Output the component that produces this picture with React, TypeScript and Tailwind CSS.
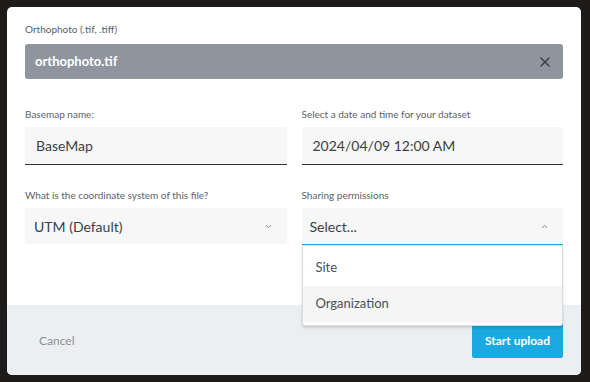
import React from "react";
import { ChevronDown, ChevronUp, X } from "lucide-react";

const font = { fontFamily: "Lato, 'Liberation Sans', sans-serif" };

const Label: React.FC<{ children: React.ReactNode }> = ({ children }) => (
  <div className="text-[10px] leading-[14px] text-[#5b6168] mb-[6px]">{children}</div>
);

export default function App() {
  return (
    <div
      className="w-[590px] h-[382px] bg-[#1d1c1a] p-[7px] pr-[9px] pb-[7px] overflow-hidden"
      style={font}
    >
      <div className="w-[574px] h-[368px] bg-white rounded-[5px] flex flex-col overflow-visible">
        <div className="relative flex-1 px-[18px] pt-[15px]">
          <div className="text-[10px] leading-[14px] text-[#5b6168] mb-[8px]">Orthophoto (.tif, .tiff)</div>
          <div className="h-[35px] bg-[#8e959e] rounded-[3px] flex items-center justify-between pl-[10px] pr-[10px]">
            <span className="text-white text-[13px] font-bold">orthophoto.tif</span>
            <X size={16} strokeWidth={2.2} className="text-[#3a3f45]" />
          </div>

          <div className="grid grid-cols-2 gap-x-[15px] mt-[28px]">
            <div>
              <Label>Basemap name:</Label>
              <div className="h-[38px] bg-[#f7f7f7] border-b border-[#333] flex items-center px-[11px] text-[14px] text-[#3a3f45]">
                BaseMap
              </div>
            </div>
            <div>
              <Label>Select a date and time for your dataset</Label>
              <div className="h-[38px] bg-[#f7f7f7] border-b border-[#333] flex items-center px-[11px] text-[14px] text-[#3a3f45]">
                2024/04/09 12:00 AM
              </div>
            </div>

            <div className="mt-[23px]">
              <Label>What is the coordinate system of this file?</Label>
              <div className="h-[36px] bg-[#f7f7f7] flex items-center justify-between pl-[9px] pr-[14px] text-[14px] text-[#3a3f45]">
                <span>UTM (Default)</span>
                <ChevronDown size={9} strokeWidth={2} className="text-[#666]" />
              </div>
            </div>
            <div className="mt-[23px] relative">
              <Label>Sharing permissions</Label>
              <div className="h-[37px] bg-[#f7f7f7] border-b border-[#1ba9e1] flex items-center justify-between pl-[8px] pr-[14px] text-[14px] text-[#3a3f45]">
                <span>Select...</span>
                <ChevronUp size={9} strokeWidth={2} className="text-[#666]" />
              </div>
              <div className="absolute left-0 right-0 top-full z-10 bg-white border border-[#dcdcdc] rounded-b-[3px] shadow-[0_2px_3px_rgba(0,0,0,0.15)] pt-[4px] pb-[3px]">
                <div className="h-[36px] flex items-center px-[13px] text-[13px] text-[#4a5057]">Site</div>
                <div className="h-[36px] flex items-center px-[13px] text-[13px] text-[#4a5057] bg-[#f5f5f5]">
                  Organization
                </div>
              </div>
            </div>
          </div>
        </div>

        <div className="h-[70px] bg-[#eceff2] rounded-b-[5px] flex items-center justify-between pl-[32px] pr-[18px] pt-[1px]">
          <span className="text-[12px] text-[#8a9097]">Cancel</span>
          <button className="h-[35px] px-[13px] bg-[#1ba9e1] text-white text-[12px] font-bold rounded-[2px]">
            Start upload
          </button>
        </div>
      </div>
    </div>
  );
}
